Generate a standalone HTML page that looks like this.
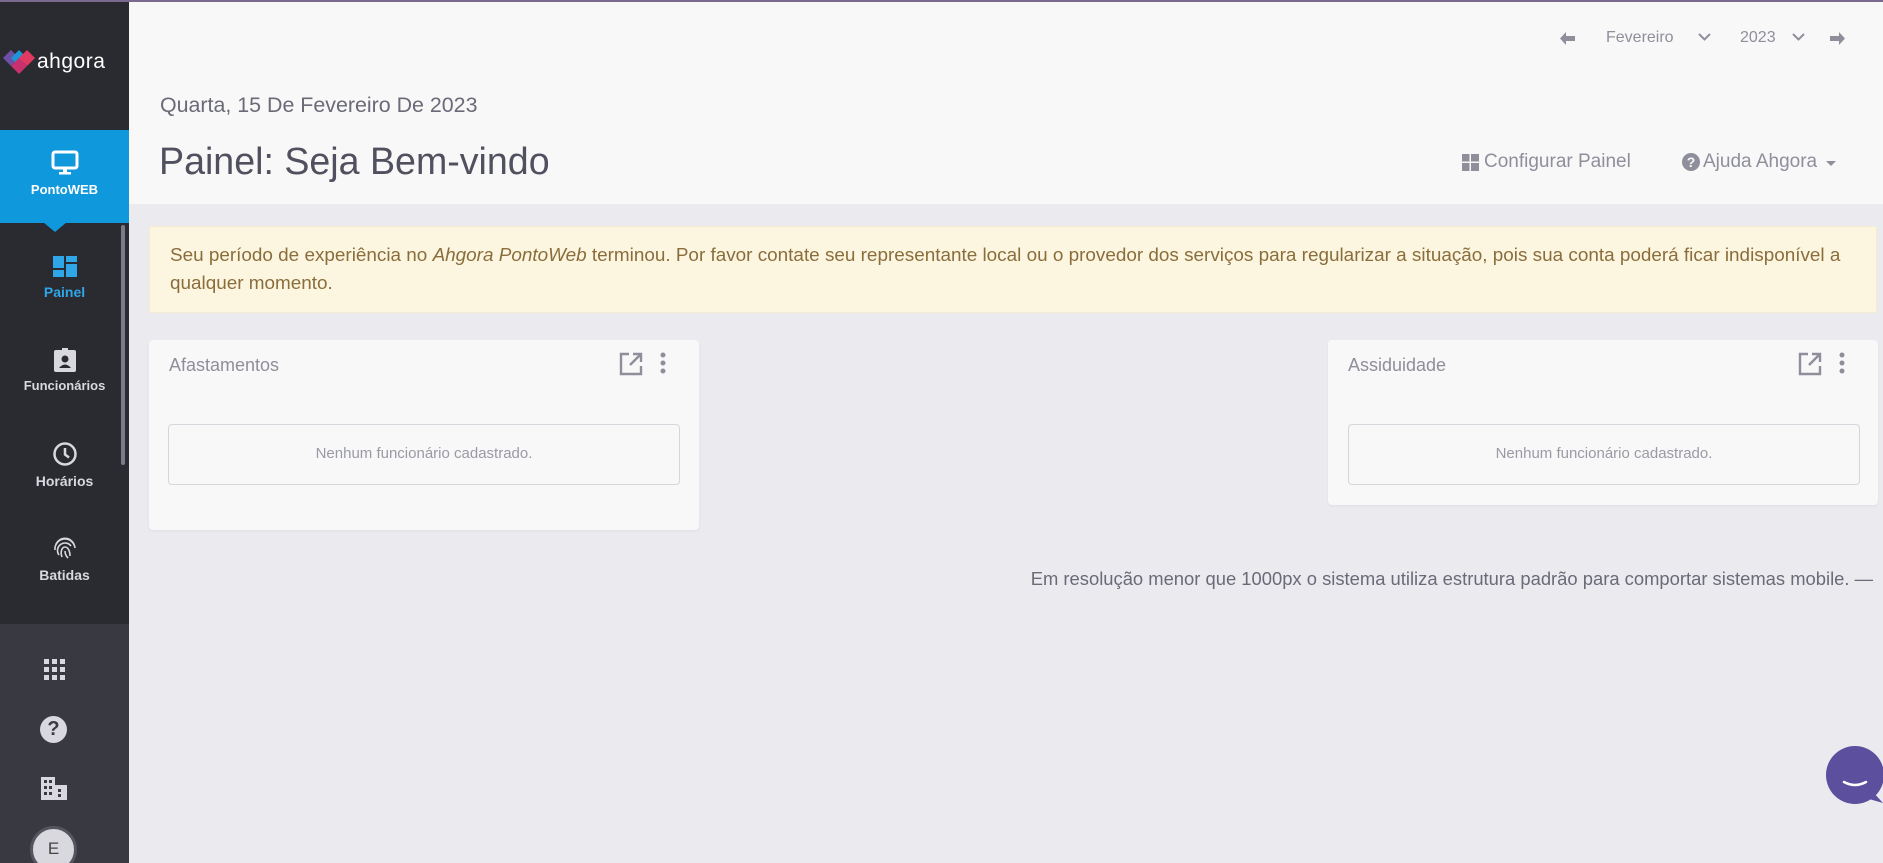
<!DOCTYPE html>
<html style="width:1883px;height:863px;overflow:hidden"><head><meta charset="utf-8"><style>
*{box-sizing:border-box;margin:0;padding:0}
body{width:1883px;height:863px;overflow:hidden;background:#ebebef;font-family:"Liberation Sans",sans-serif;position:relative}
.abs{position:absolute}
#side{left:0;top:0;width:129px;height:863px;background:#2a2a31}
#side .low{position:absolute;left:0;top:624px;width:129px;height:239px;background:#393941}
.nav{position:absolute;left:0;width:129px;text-align:center;color:#d8d8de;font-size:13px;font-weight:bold}
.nav svg{display:block;margin:0 auto 6px}
#head{left:129px;top:0;width:1754px;height:204px;background:#f8f8f8}
.g{color:#8f8f9c}
.card{background:#f8f8f8;border-radius:4px;box-shadow:0 1px 2px rgba(0,0,0,.05)}
.inner{position:absolute;border:1px solid #d6d6dc;border-radius:4px;text-align:center;color:#9a9aa5;font-size:15px;line-height:58px}
.ct{position:absolute;left:20px;top:15px;font-size:18px;color:#8f8f9c}
</style></head><body>
<div class="abs" style="left:0;top:0;width:1883px;height:2px;background:#7a6a8e;z-index:5"></div>
<div id="side" class="abs">
 <svg class="abs" style="left:2px;top:46px" width="34" height="30" viewBox="0 0 34 30"><path d="M9 4 L17 12 L9 20 L1 12Z" fill="#6d4fa5"/><path d="M17 4 L25 12 L17 20 L9 12Z" fill="#1b95d6"/><path d="M25 4 L33 12 L25 20 L17 12Z" fill="#e03a63"/><path d="M17 12 L25 20 L17 28 L9 20Z" fill="#c8306e"/></svg>
 <div class="abs" style="left:37px;top:50px;color:#fff;font-size:21px;letter-spacing:.5px">ahgora</div>
 <div class="abs" style="left:0;top:130px;width:129px;height:93px;background:#0f98dc"></div>
 <div class="abs" style="left:43px;top:222px;width:0;height:0;border-left:12px solid transparent;border-right:12px solid transparent;border-top:10px solid #0f98dc"></div>
 <div class="nav" style="top:150px;color:#fff">
  <svg width="28" height="26" viewBox="0 0 28 26"><rect x="2" y="2" width="24" height="16" rx="2" fill="none" stroke="#fff" stroke-width="3"/><rect x="12" y="18" width="4" height="4" fill="#fff"/><rect x="8" y="22" width="12" height="2.5" fill="#fff"/></svg>PontoWEB</div>
 <div class="abs" style="left:121px;top:225px;width:4px;height:240px;background:#7a7a88;border-radius:2px"></div>
 <div class="nav" style="top:256px;color:#2fa6e8;font-size:14px">
  <svg width="24" height="22" viewBox="0 0 24 22"><rect x="0" y="0" width="11" height="12" fill="#2fa6e8"/><rect x="13" y="0" width="11" height="6" fill="#2fa6e8"/><rect x="0" y="14" width="11" height="7" fill="#2fa6e8"/><rect x="13" y="8" width="11" height="13" fill="#2fa6e8"/></svg>Painel</div>
 <div class="nav" style="top:348px">
  <svg width="22" height="24" viewBox="0 0 22 24"><rect x="0" y="2" width="22" height="22" rx="2" fill="#d8d8de"/><rect x="8" y="0" width="6" height="4" fill="#d8d8de"/><circle cx="11" cy="11" r="3.5" fill="#2a2a31"/><path d="M5 20 Q11 13 17 20Z" fill="#2a2a31"/></svg>Funcionários</div>
 <div class="nav" style="top:441px;font-size:14px">
  <svg width="26" height="26" viewBox="0 0 26 26"><circle cx="13" cy="13" r="10.5" fill="none" stroke="#d8d8de" stroke-width="2.5"/><path d="M13 7v6.5l4 3" fill="none" stroke="#d8d8de" stroke-width="2.5"/></svg>Horários</div>
 <div class="nav" style="top:535px;font-size:14px">
  <svg width="26" height="26" viewBox="0 0 26 26" fill="none" stroke="#d8d8de" stroke-width="1.6"><path d="M4 9a10 10 0 0 1 18 0"/><path d="M3 15a10 10 0 0 1 20-2"/><path d="M7 20a7 7 0 0 1 12-9"/><path d="M10 22c-2-5 0-10 3-10s5 4 5 9"/><path d="M13 16c0 3 1 5 3 7"/></svg>Batidas</div>
 <div class="low"></div>
 <svg class="abs" style="left:44px;top:659px" width="21" height="21" viewBox="0 0 21 21" fill="#d8d8de"><rect x="0" y="0" width="5" height="5"/><rect x="8" y="0" width="5" height="5"/><rect x="16" y="0" width="5" height="5"/><rect x="0" y="8" width="5" height="5"/><rect x="8" y="8" width="5" height="5"/><rect x="16" y="8" width="5" height="5"/><rect x="0" y="16" width="5" height="5"/><rect x="8" y="16" width="5" height="5"/><rect x="16" y="16" width="5" height="5"/></svg>
 <div class="abs" style="left:40px;top:716px;width:27px;height:27px;border-radius:50%;background:#d8d8de;color:#393941;font-weight:bold;font-size:20px;text-align:center;line-height:27px">?</div>
 <svg class="abs" style="left:41px;top:777px" width="26" height="23" viewBox="0 0 26 23" fill="#d8d8de"><rect x="0" y="0" width="14" height="23"/><rect x="14" y="8" width="12" height="15"/><g fill="#393941"><rect x="3" y="3" width="3" height="3"/><rect x="8" y="3" width="3" height="3"/><rect x="3" y="9" width="3" height="3"/><rect x="8" y="9" width="3" height="3"/><rect x="3" y="15" width="3" height="3"/><rect x="8" y="15" width="3" height="3"/><rect x="17" y="12" width="3" height="3"/><rect x="17" y="17" width="3" height="3"/></g></svg>
 <div class="abs" style="left:30px;top:826px;width:47px;height:37px;overflow:hidden"><div style="width:47px;height:47px;border-radius:50%;border:3px solid #55555f;background:#d8d8de;color:#444;text-align:center;line-height:40px;font-size:17px">E</div></div>
</div>

<div id="head" class="abs"></div>
<svg class="abs" style="left:1560px;top:32px" width="15" height="13" viewBox="0 0 15 13"><path d="M0 6.5L6 0v4h9v5H6v4z" fill="#8f8f9c"/></svg>
<div class="abs g" style="left:1606px;top:29px;font-size:16px">Fevereiro</div>
<svg class="abs" style="left:1698px;top:33px" width="13" height="9" viewBox="0 0 13 9"><path d="M1 1l5.5 5.5L12 1" fill="none" stroke="#8f8f9c" stroke-width="2"/></svg>
<div class="abs g" style="left:1740px;top:29px;font-size:16px">2023</div>
<svg class="abs" style="left:1792px;top:33px" width="13" height="9" viewBox="0 0 13 9"><path d="M1 1l5.5 5.5L12 1" fill="none" stroke="#8f8f9c" stroke-width="2"/></svg>
<svg class="abs" style="left:1830px;top:32px" width="15" height="13" viewBox="0 0 15 13"><path d="M15 6.5L9 0v4H0v5h9v4z" fill="#8f8f9c"/></svg>

<div class="abs" style="left:160px;top:93px;font-size:21.4px;color:#6a6a78">Quarta, 15 De Fevereiro De 2023</div>
<div class="abs" style="left:159px;top:140px;font-size:37.6px;color:#50505e">Painel: Seja Bem-vindo</div>
<svg class="abs" style="left:1462px;top:154px" width="17" height="17" viewBox="0 0 17 17" fill="#8f8f9c"><rect width="7.5" height="7.5"/><rect x="9" width="8" height="7.5"/><rect y="9" width="7.5" height="8"/><rect x="9" y="9" width="8" height="8"/></svg>
<div class="abs g" style="left:1484px;top:151px;font-size:19px">Configurar Painel</div>
<div class="abs" style="left:1682px;top:153px;width:18px;height:18px;border-radius:50%;background:#8f8f9c;color:#f8f8f8;font-size:14px;font-weight:bold;text-align:center;line-height:18px">?</div>
<div class="abs g" style="left:1703px;top:151px;font-size:19px">Ajuda Ahgora</div>
<div class="abs" style="left:1826px;top:161px;border-left:5px solid transparent;border-right:5px solid transparent;border-top:5px solid #8f8f9c"></div>

<div class="abs" style="left:149px;top:226px;width:1728px;height:87px;background:#fcf6e0;border:1px solid #f5ecd0;border-radius:3px;color:#8a6d3b;font-size:18.9px;line-height:28px;padding:15px 20px;white-space:nowrap">Seu período de experiência no <i>Ahgora PontoWeb</i> terminou. Por favor contate seu representante local ou o provedor dos serviços para regularizar a situação, pois sua conta poderá ficar indisponível a<br>qualquer momento.</div>

<div class="abs card" style="left:149px;top:340px;width:550px;height:190px">
 <div class="ct">Afastamentos</div>
 <svg class="abs" style="left:470px;top:12px" width="24" height="24" viewBox="0 0 24 24" fill="none" stroke="#8f8f9c" stroke-width="2.4"><path d="M10 2H2v20h20v-8"/><path d="M14 2h8v8M22 2L11 13"/></svg>
 <svg class="abs" style="left:511px;top:12px" width="6" height="22" viewBox="0 0 6 22" fill="#8f8f9c"><circle cx="3" cy="3" r="2.5"/><circle cx="3" cy="11" r="2.5"/><circle cx="3" cy="19" r="2.5"/></svg>
 <div class="inner" style="left:19px;top:84px;width:512px;height:61px">Nenhum funcionário cadastrado.</div>
</div>
<div class="abs card" style="left:1328px;top:340px;width:550px;height:165px">
 <div class="ct">Assiduidade</div>
 <svg class="abs" style="left:470px;top:12px" width="24" height="24" viewBox="0 0 24 24" fill="none" stroke="#8f8f9c" stroke-width="2.4"><path d="M10 2H2v20h20v-8"/><path d="M14 2h8v8M22 2L11 13"/></svg>
 <svg class="abs" style="left:511px;top:12px" width="6" height="22" viewBox="0 0 6 22" fill="#8f8f9c"><circle cx="3" cy="3" r="2.5"/><circle cx="3" cy="11" r="2.5"/><circle cx="3" cy="19" r="2.5"/></svg>
 <div class="inner" style="left:20px;top:84px;width:512px;height:61px">Nenhum funcionário cadastrado.</div>
</div>

<div class="abs" style="right:10px;top:568px;font-size:18.4px;color:#6a6a78;white-space:nowrap">Em resolução menor que 1000px o sistema utiliza estrutura padrão para comportar sistemas mobile. —</div>

<svg class="abs" style="left:1826px;top:746px" width="57" height="60" viewBox="0 0 57 60"><circle cx="29" cy="29" r="29" fill="#5c4f9e"/><path d="M46 45l11 12-14-4z" fill="#5c4f9e"/><path d="M18 36q11 6 22 0" fill="none" stroke="#fff" stroke-width="2.5" stroke-linecap="round"/></svg>
</body></html>
